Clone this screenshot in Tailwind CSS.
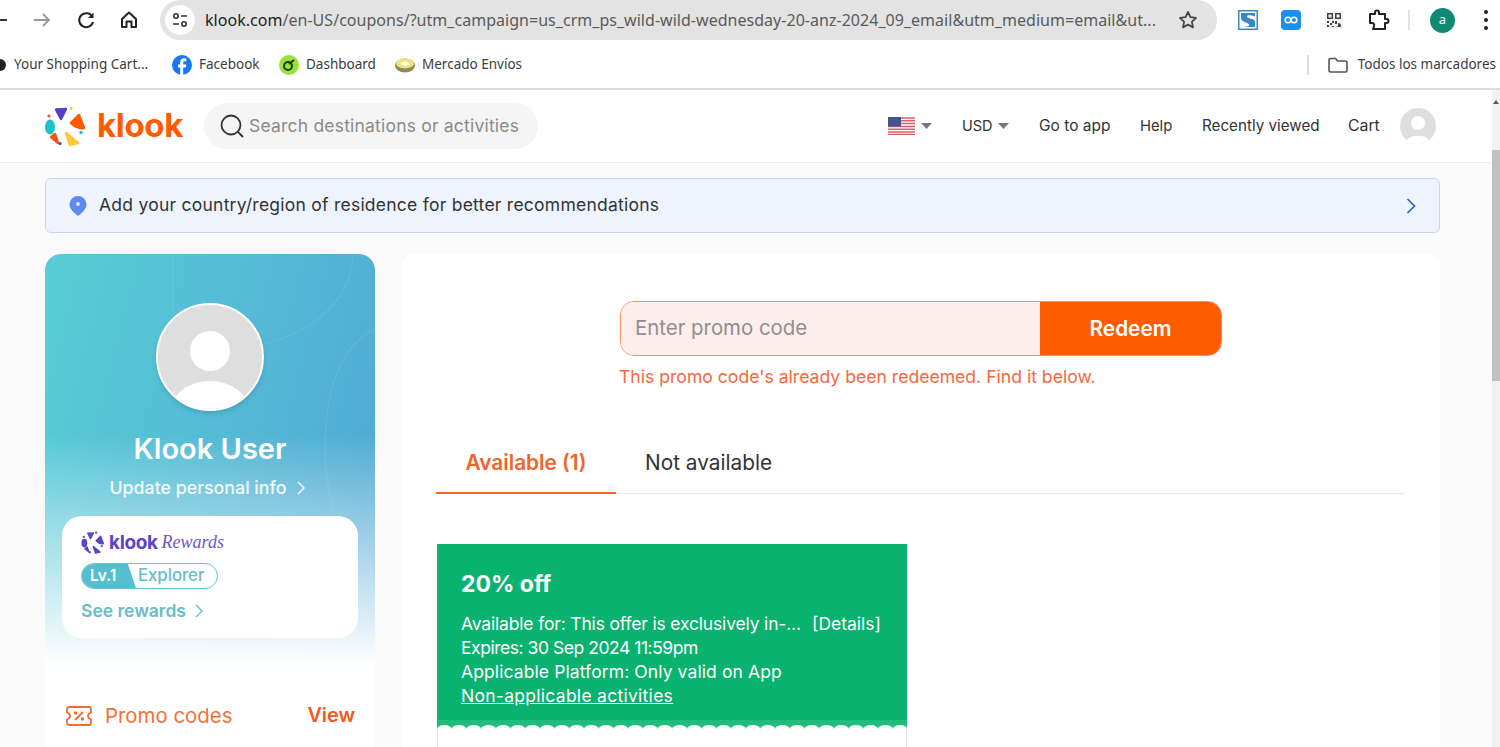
<!DOCTYPE html>
<html lang="en">
<head>
<meta charset="utf-8">
<title>Klook coupons</title>
<script src="https://cdn.jsdelivr.net/npm/@tailwindcss/browser@4"></script>
</head>
<body class="w-[1500px] h-[747px] overflow-hidden bg-white font-['Inter',sans-serif]">
<div class="flex flex-col h-[747px] overflow-hidden">

  <!-- browser toolbar -->
  <div class="h-[44px] shrink-0 flex items-start relative">
    <div class="w-[160px] h-[40px] shrink-0 flex items-center text-[#333]">
      <svg class="w-[160px] h-[40px]" viewBox="0 0 160 40" fill="none">
        <path d="M0 20H7" stroke="#333" stroke-width="2"/>
        <path d="M34 20H49M43 14l6 6-6 6" stroke="#9a9a9a" stroke-width="1.8"/>
        <path d="M92.5 17a7 7 0 1 0 .5 5" stroke="#222" stroke-width="2"/><path d="M93.5 12.5V18H88" fill="#222"/>
        <path d="M122 19l7-6.500 7 6.500v8h-4.500v-5.500h-5V27H122z" stroke="#222" stroke-width="2" stroke-linejoin="round"/>
      </svg>
    </div>
    <div class="w-[1057px] h-[40px] shrink-0 rounded-[20px] bg-[#e3e3e3] flex items-center pl-[5px] pr-[19px]">
      <div class="w-[30px] h-[30px] rounded-full bg-white flex items-center justify-center shrink-0">
        <svg class="w-[18px] h-[18px]" viewBox="0 0 18 18" fill="none" stroke="#333" stroke-width="1.600"><circle cx="5" cy="5" r="2.200"/><path d="M10 5h6M2 13h6"/><circle cx="13" cy="13" r="2.200"/></svg>
      </div>
      <div class="ml-[10px] flex-1 min-w-0 whitespace-nowrap text-[16px] text-[#5a5a5a] font-['Noto_Sans',sans-serif] tracking-[0.03px]"><span class="text-[#222]">klook.com</span>/en-US/coupons/?utm_campaign=us_crm_ps_wild-wild-wednesday-20-anz-2024_09_email&amp;utm_medium=email&amp;ut...</div>
      <svg class="w-[20px] h-[20px] ml-[10px] shrink-0" viewBox="0 0 20 20" fill="none" stroke="#444" stroke-width="1.800" stroke-linejoin="round"><path d="M10 2l2.400 5.200 5.600.7-4.100 3.900 1.100 5.600L10 14.600l-5 2.800 1.100-5.600L2 7.900l5.600-.7z"/></svg>
    </div>
    <div class="flex-1 h-[40px] flex items-center pl-[21px]">
      <svg class="w-[20px] h-[20px]" viewBox="0 0 20 20"><rect width="20" height="20" fill="#3b87bd"/><rect x="1.500" y="1.500" width="17" height="17" fill="#fff"/><path d="M3 3h14v3.500C12 4.500 9 5 9 6.500c0 2 8 2 8 5V17H3c6 0 9-1 8-2.500C10 12.500 3 12 3 8z" fill="#3b87bd"/></svg>
      <div class="ml-[23px] w-[20px] h-[20px] rounded-[4px] bg-[#1b8ff0] flex items-center justify-center">
        <svg class="w-[14px] h-[8px]" viewBox="0 0 14 8" fill="none" stroke="#fff" stroke-width="1.600"><circle cx="4" cy="4" r="2.800"/><circle cx="10" cy="4" r="2.800"/></svg>
      </div>
      <svg class="ml-[24px] w-[18px] h-[18px]" viewBox="0 0 18 18" fill="#444"><rect width="18" height="18" fill="#f2f2f2"/><path fill-rule="evenodd" d="M2 2h6v6H2zM3.500 3.500v3h3v-3zM10 2h6v6h-6zM11.500 3.500v3h3v-3z"/><path d="M2 10h2v2H2zM5 12h2v2H5zM2 14h2v2H2zM7 10h2v2H7zM10 10h2v3h-2zM13 12a3 3 0 0 1 3 3v1h-5l2-1zM7 15h2v1H7z"/></svg>
      <svg class="ml-[25px] w-[22px] h-[22px]" viewBox="0 0 22 22" fill="none" stroke="#222" stroke-width="2" stroke-linejoin="round"><path d="M2 5h5V3.500a2 2 0 0 1 4 0V5h6v5h1.500a2 2 0 0 1 0 4H17v6H5l1-2.500c.8-2-.5-3.500-2-3.500H2z"/></svg>
      <div class="ml-[18px] w-[2px] h-[20px] bg-[#e4e2df]"></div>
      <div class="ml-[20px] w-[25px] h-[25px] rounded-full bg-[#0f8a73] text-white text-[13px] flex items-center justify-center font-['Noto_Sans',sans-serif]">a</div>
      <div class="ml-[29px] flex flex-col gap-[4px]"><span class="w-[4px] h-[4px] rounded-full bg-[#222]"></span><span class="w-[4px] h-[4px] rounded-full bg-[#222]"></span><span class="w-[4px] h-[4px] rounded-full bg-[#222]"></span></div>
    </div>
  </div>

  <!-- bookmarks -->
  <div class="h-[46px] shrink-0 border-b-2 border-[#dcdcdc] flex items-center pb-[3px] text-[13.500px] text-[#3c3c3c] font-['Noto_Sans',sans-serif] relative">
    <span class="w-[6px] h-[12px] rounded-r-full bg-[#222] shrink-0"></span>
    <span class="ml-[8px] w-[135px] whitespace-nowrap">Your Shopping Cart...</span>
    <svg class="ml-[23px] w-[20px] h-[20px]" viewBox="0 0 20 20"><circle cx="10" cy="10" r="10" fill="#1877f2"/><path d="M11.200 20v-7.500h2.500l.5-3h-3V7.700c0-.9.4-1.500 1.600-1.500h1.500V3.500c-.5 0-1.400-.2-2.300-.2-2.400 0-3.800 1.400-3.800 3.900v2.300H6v3h2.200V20z" fill="#fff"/></svg>
    <span class="ml-[7px] w-[61px] whitespace-nowrap">Facebook</span>
    <svg class="ml-[19px] w-[20px] h-[20px]" viewBox="0 0 20 20" fill="none"><circle cx="10" cy="10" r="10" fill="#9be03d"/><circle cx="9" cy="11" r="4" stroke="#1f3a14" stroke-width="2"/><path d="M10 9l5-4" stroke="#1f3a14" stroke-width="2"/></svg>
    <span class="ml-[7px] w-[70px] whitespace-nowrap">Dashboard</span>
    <svg class="ml-[19px] w-[20px] h-[16px]" viewBox="0 0 20 16"><ellipse cx="10" cy="8.500" rx="10" ry="7" fill="#8d8a5c"/><ellipse cx="10" cy="6.500" rx="9" ry="5" fill="#f1e27a"/><path d="M5 7l4-3 3 1 3 2-4 2z" fill="#fff"/></svg>
    <span class="ml-[7px] whitespace-nowrap">Mercado Envíos</span>
    <div class="ml-auto flex items-center">
      <div class="w-[2px] h-[20px] bg-[#e0ddd9]"></div>
      <svg class="ml-[19px] w-[20px] h-[16px]" viewBox="0 0 20 16" fill="none" stroke="#555" stroke-width="1.600" stroke-linejoin="round"><path d="M1 3a1.500 1.500 0 0 1 1.500-1.500h5l2 2.500h8a1.500 1.500 0 0 1 1.500 1.500v8a1.500 1.500 0 0 1-1.500 1.500h-15A1.500 1.500 0 0 1 1 13.500z"/></svg>
      <span class="ml-[10px] pr-[4px] whitespace-nowrap">Todos los marcadores</span>
    </div>
  </div>

  <!-- page + scrollbar -->
  <div class="flex-1 min-h-0 flex">
    <div class="flex-1 min-w-0 bg-[#fafafa] overflow-hidden">

      <!-- site header -->
      <header class="h-[73px] bg-white border-b border-[#eeeeee] flex items-center pl-[44px] pr-[56px] text-[15.200px] text-[#333]">
        <svg class="w-[41px] h-[40px] shrink-0" viewBox="0 0 41 40" stroke-linejoin="round" stroke-width="2.500">
          <path d="M12 3.500l10-.5-5 10z" fill="#5a3fc4" stroke="#5a3fc4"/>
          <path d="M27 17l8-8 5 13c-3 1-9-1-13-5z" fill="#ff5b00" stroke="#ff5b00"/>
          <ellipse cx="6" cy="21" rx="5" ry="7.500" fill="#1fc1c9"/>
          <path d="M7 31l4-3 3 9z" fill="#f2541b" stroke="#f2541b"/>
          <path d="M22 27l12 10-8 2z" fill="#ffc83a" stroke="#ffc83a"/>
          <circle cx="27" cy="2.500" r="1.500" fill="#ffc83a"/><circle cx="5" cy="10" r="1.600" fill="#f2541b"/><circle cx="16" cy="37.500" r="1.600" fill="#5a3fc4"/><circle cx="37" cy="26.500" r="1.700" fill="#1fc1c9"/>
        </svg>
        <span class="ml-[12px] w-[87px] pb-[2px] text-[33px] leading-none font-bold text-[#ff5b00] tracking-[-0.01em] shrink-0">klook</span>
        <div class="ml-[20px] w-[334px] h-[46px] rounded-full bg-[#f5f5f5] flex items-center pl-[16px] shrink-0">
          <svg class="w-[24px] h-[24px] shrink-0" viewBox="0 0 24 24" fill="none" stroke="#333" stroke-width="1.800"><circle cx="11" cy="11" r="9.500"/><path d="M18 18l4.500 4.500" stroke-linecap="round"/></svg>
          <span class="ml-[5px] text-[17.500px] text-[#8a8a8a] whitespace-nowrap tracking-[0.2px]">Search destinations or activities</span>
        </div>
        <svg class="ml-auto w-[27px] h-[18px] shrink-0" viewBox="0 0 27 18">
          <rect width="27" height="18" fill="#fff"/>
          <path d="M0 1h27M0 3.800h27M0 6.600h27M0 9.400h27M0 12.200h27M0 15h27M0 17.500h27" stroke="#d9606a" stroke-width="1.500"/>
          <rect width="13" height="9.500" fill="#4b4f8f"/>
        </svg>
        <svg class="ml-[6px] w-[11px] h-[6px] shrink-0" viewBox="0 0 11 6"><path d="M0 0h11L5.500 6z" fill="#777"/></svg>
        <span class="ml-[30px] w-[29px] shrink-0 text-[14.500px] whitespace-nowrap">USD</span>
        <svg class="ml-[7px] w-[11px] h-[6px] shrink-0" viewBox="0 0 11 6"><path d="M0 0h11L5.500 6z" fill="#777"/></svg>
        <span class="ml-[30px] w-[72px] shrink-0 whitespace-nowrap text-[15.500px]">Go to app</span>
        <span class="ml-[29px] w-[32px] shrink-0 text-[14.800px]">Help</span>
        <span class="ml-[30px] w-[117px] shrink-0 whitespace-nowrap">Recently viewed</span>
        <span class="ml-[29px] w-[32px] shrink-0 text-[15.800px]">Cart</span>
        <div class="ml-[20px] w-[36px] h-[36px] rounded-full bg-[#dedede] overflow-hidden relative shrink-0">
          <span class="absolute left-[11px] top-[8px] w-[14px] h-[14px] rounded-full bg-white"></span>
          <span class="absolute left-[5px] top-[28px] w-[26px] h-[20px] rounded-full bg-white"></span>
        </div>
      </header>

      <div class="pl-[45px] pr-[52px]">
        <!-- notice -->
        <div class="mt-[15px] h-[55px] rounded-[6px] bg-[#eef4fe] border border-[#c4d6f6] flex items-center pl-[23px] pr-[23px]">
          <svg class="w-[18px] h-[20px] shrink-0" viewBox="0 0 18 20"><path d="M9 20C4 16 .5 12.500.5 8.500a8.500 8.500 0 0 1 17 0C17.500 12.500 14 16 9 20z" fill="#5c8af0"/><circle cx="9" cy="8" r="2" fill="#dbe6fd"/></svg>
          <span class="ml-[12px] text-[17.500px] text-[#333] whitespace-nowrap tracking-[0.014em]">Add your country/region of residence for better recommendations</span>
          <svg class="ml-auto w-[10px] h-[16px] shrink-0" viewBox="0 0 10 16" fill="none" stroke="#2f5fc0" stroke-width="1.700"><path d="M1.500 1l7 7-7 7"/></svg>
        </div>

        <div class="mt-[21px] flex gap-[26px] items-start">
          <!-- sidebar -->
          <aside class="w-[330px] h-[520px] shrink-0 rounded-t-[16px] bg-white overflow-hidden relative">
            <div class="h-[411px] bg-[linear-gradient(180deg,transparent_44%,#ffffff_100%),linear-gradient(105deg,#58ced6,#50a6d4)] flex flex-col items-center pt-[49px] relative">
              <svg class="absolute inset-0 w-[330px] h-[300px]" viewBox="0 0 330 300" fill="none" stroke="#ffffff" stroke-opacity="0.08" stroke-width="1.500"><path d="M308 0c0 50-50 90-120 94M330 75c-40 20-50 70-50 120 0 40 12 80 25 105M128 0v90"/></svg>
              <div class="relative w-[108px] h-[108px] rounded-full bg-[#dedede] border-2 border-white overflow-hidden shadow-md shrink-0">
                <span class="absolute left-[32px] top-[26px] w-[40px] h-[40px] rounded-full bg-white"></span>
                <span class="absolute left-[13px] top-[76px] w-[78px] h-[60px] rounded-[50%] bg-white"></span>
              </div>
              <h1 class="relative mt-[20px] text-[29px] leading-[36px] font-semibold text-white whitespace-nowrap">Klook User</h1>
              <div class="relative mt-[9px] pr-[6px] flex items-center text-[17.800px] leading-[24px] font-medium text-white/90 whitespace-nowrap">Update personal info
                <svg class="ml-[10px] w-[8px] h-[14px]" viewBox="0 0 8 14" fill="none" stroke="#ffffff" stroke-width="1.400"><path d="M1 1l6 6-6 6"/></svg>
              </div>
              <div class="relative mt-[16px] w-[296px] h-[122px] rounded-[20px] bg-white pl-[19px] pt-[14px] shrink-0">
                <div class="flex items-center h-[24px]">
                  <svg class="w-[23px] h-[23px]" viewBox="0 0 41 40" fill="#5b45c4" stroke="#5b45c4" stroke-linejoin="round" stroke-width="2.500">
                    <path d="M12 3.500l10-.5-5 10zM27 17l8-8 5 13c-3 1-9-1-13-5zM7 31l4-3 3 9zM22 27l12 10-8 2z"/>
                    <ellipse cx="6" cy="21" rx="4" ry="6.500"/>
                    <circle cx="27" cy="2.500" r=".8"/><circle cx="5" cy="10" r=".8"/><circle cx="16" cy="37.500" r=".8"/><circle cx="37" cy="26.500" r=".8"/>
                  </svg>
                  <span class="ml-[5px] text-[19px] leading-none font-bold text-[#5b45c4] tracking-[-0.02em]">klook</span>
                  <span class="ml-[4px] text-[18px] leading-none italic text-[#6a57c9] font-['Liberation_Serif',serif]">Rewards</span>
                </div>
                <div class="mt-[9px] w-[137px] h-[26px] rounded-full border border-[#62c2d2] overflow-hidden flex items-center relative">
                  <div class="absolute inset-y-0 left-0 w-[54px] bg-[#55bfcf] [clip-path:polygon(0_0,85%_0,100%_100%,0_100%)]"></div>
                  <span class="relative ml-[8px] w-[48px] text-[15.500px] font-semibold text-white">Lv.1</span>
                  <span class="relative text-[16.700px] font-medium text-[#66bdcd]">Explorer</span>
                </div>
                <div class="mt-[11px] flex items-center text-[17.500px] leading-[22px] font-semibold text-[#66bdcd] whitespace-nowrap">See rewards
                  <svg class="ml-[9px] w-[8px] h-[14px]" viewBox="0 0 8 14" fill="none" stroke="#66bdcd" stroke-width="1.400"><path d="M1 1l6 6-6 6"/></svg>
                </div>
              </div>
            </div>
            <div class="mt-[36px] flex items-center pl-[21px] pr-[20px]">
              <svg class="w-[26px] h-[20px] shrink-0" viewBox="0 0 26 20" fill="none" stroke="#f26a2e" stroke-width="1.800" stroke-linejoin="round"><path d="M3 1h20a2 2 0 0 1 2 2v3.500c-2 .8-3 2-3 3.500s1 2.700 3 3.500V17a2 2 0 0 1-2 2H3a2 2 0 0 1-2-2v-3.500c2-.8 3-2 3-3.500S3 7.300 1 6.500V3a2 2 0 0 1 2-2z"/><path d="M9 14l8-8"/><circle cx="9.500" cy="7" r=".8"/><circle cx="16.500" cy="13" r=".8"/></svg>
              <span class="ml-[13px] text-[20.400px] text-[#f4703a] whitespace-nowrap">Promo codes</span>
              <span class="ml-auto text-[19.800px] font-semibold text-[#f15a1f]">View</span>
            </div>
          </aside>

          <!-- main panel -->
          <main class="flex-1 min-w-0 h-[520px] rounded-t-[14px] bg-white pl-[35px] pr-[35px]">
            <div class="ml-[184px] mt-[47px] w-[602px] h-[55px] rounded-[14px] border border-[#f2935f] overflow-hidden flex">
              <div class="flex-1 bg-[#fceeed] pl-[14px] flex items-center text-[20.400px] text-[#8f8f8f] whitespace-nowrap">Enter promo code</div>
              <div class="w-[181px] bg-[#ff5b00] flex items-center justify-center text-[20.800px] font-semibold text-white">Redeem</div>
            </div>
            <p class="ml-[183px] mt-[10px] text-[17.600px] leading-[22px] text-[#f4683c] whitespace-nowrap">This promo code's already been redeemed. Find it below.</p>
            <div class="mt-[52px] h-[54px] border-b border-[#e8e8e8] flex text-[20.800px] leading-[26px]">
              <div class="w-[180px] h-[54px] border-b-2 border-[#f0652a] text-center pt-[10px] font-semibold text-[#f0652a] whitespace-nowrap">Available (1)</div>
              <div class="ml-[29px] pt-[10px] text-[#333] whitespace-nowrap">Not available</div>
            </div>
            <div class="mt-[50px] ml-[1px] w-[470px]">
              <div class="h-[176px] bg-[#0ab26f] pt-[24px] pl-[24px] text-white">
                <div class="text-[23px] leading-[32px] font-bold">20% off</div>
                <div class="mt-[11.500px] text-[17.500px] leading-[24.300px]">
                  <div class="flex whitespace-nowrap"><span class="w-[351px] tracking-[-0.17px]">Available for: This offer is exclusively in-...</span><span>[Details]</span></div>
                  <div class="tracking-[-0.46px]">Expires: 30 Sep 2024 11:59pm</div>
                  <div class="tracking-[0.1px]">Applicable Platform: Only valid on App</div>
                  <div class="underline tracking-[0.28px]">Non-applicable activities</div>
                </div>
              </div>
              <svg class="block w-[470px] h-[9px]" viewBox="0 0 470 9" preserveAspectRatio="none">
                <defs><pattern id="scallop" width="14.700" height="9" patternUnits="userSpaceOnUse"><rect width="14.700" height="9" fill="#20bd79"/><ellipse cx="7.350" cy="9" rx="7.350" ry="4" fill="#ffffff"/></pattern></defs>
                <rect width="470" height="9" fill="url(#scallop)"/>
              </svg>
              <div class="h-[40px] bg-white border-x border-[#e4e4e4]"></div>
            </div>
          </main>
        </div>
      </div>
    </div>

    <!-- scrollbar -->
    <div class="w-[8px] shrink-0 bg-[#f1f1f1] flex flex-col items-center">
      <svg class="mt-[10px] w-[6px] h-[4px]" viewBox="0 0 6 4"><path d="M3 0l3 4H0z" fill="#555"/></svg>
      <div class="mt-[46px] w-[8px] h-[231px] bg-[#c1c1c1]"></div>
    </div>
  </div>
</div>
</body>
</html>
